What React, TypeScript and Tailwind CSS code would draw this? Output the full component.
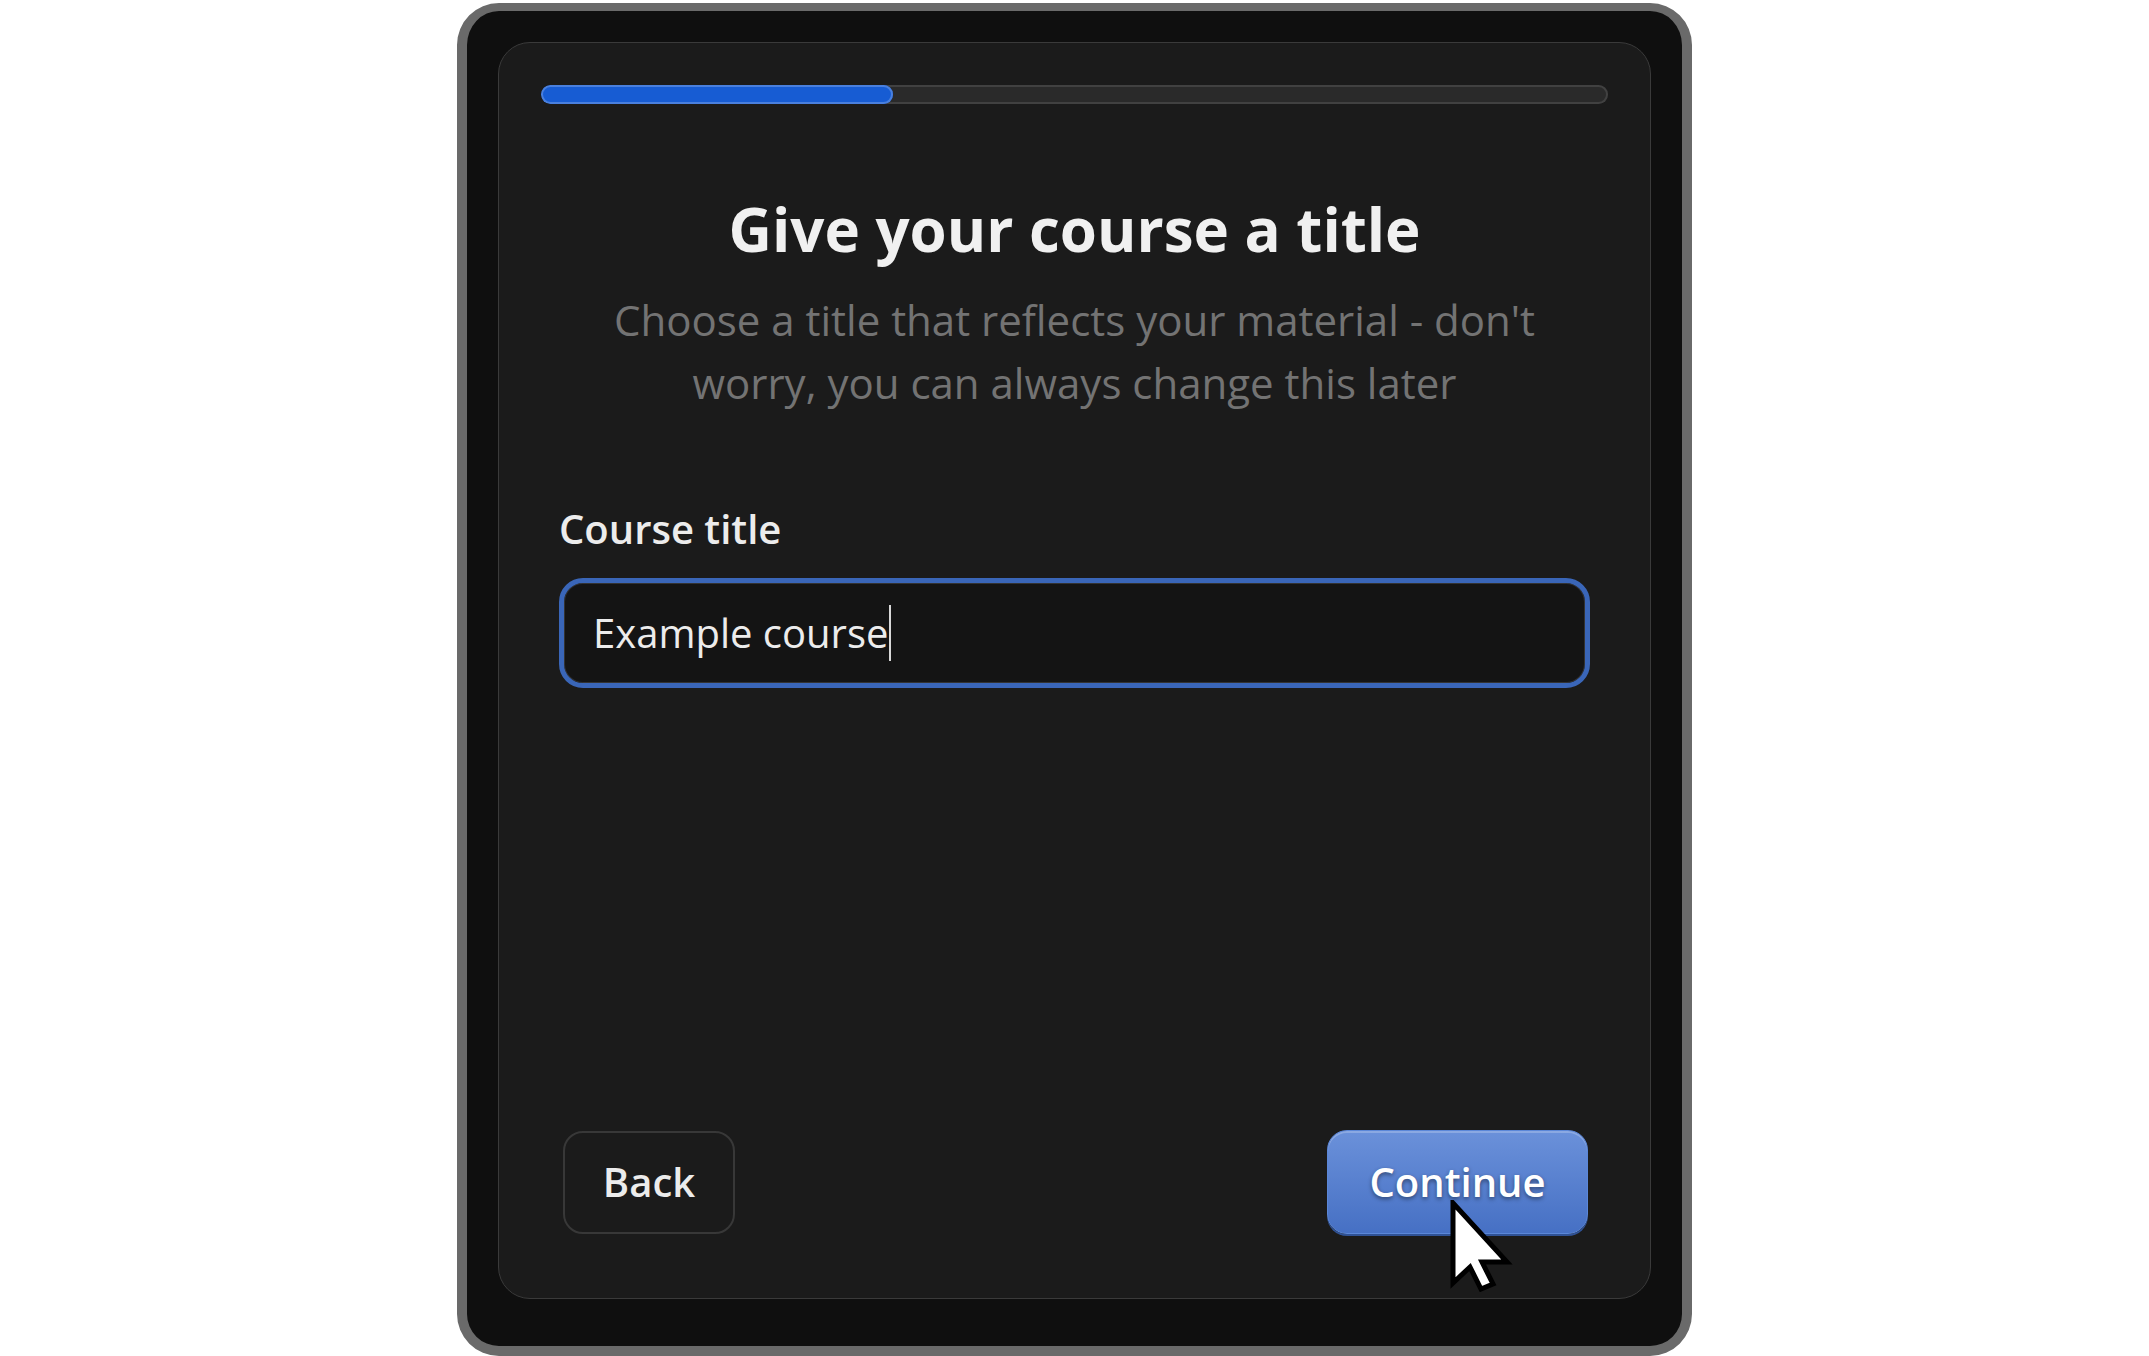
import React from "react";

function Cursor() {
  return (
    <svg
      width="64"
      height="92"
      viewBox="0 0 64 92"
      className="absolute left-[123px] top-[70px] pointer-events-none"
    >
      <polygon
        points="3,3 3,83 20,67 31,89 43,84 32,62 57,62"
        fill="#ffffff"
        stroke="#000000"
        strokeWidth="5"
        strokeLinejoin="miter"
      />
    </svg>
  );
}

export default function App() {
  const progress = 0.33;
  return (
    <div className="w-full h-[1356px] bg-white font-['Open_Sans',sans-serif] overflow-hidden">
      <div className="mx-auto mt-[3px] w-[1235px] h-[1353px] rounded-[42px] border-[10px] border-t-[8px] border-[#6a6a6a] bg-[#0f0f0f] pt-[31px] px-[31px] pb-[47px] flex flex-col">
        <div className="flex-1 flex flex-col rounded-[32px] border border-[#3a3a3a] bg-[#1b1b1b] p-[42px]">
          {/* step progress */}
          <div className="h-[19px] rounded-full bg-[#2a2a2a] shadow-[inset_0_0_0_2px_#414141] overflow-hidden">
            <div
              className="h-full rounded-full bg-[#175cd3] shadow-[inset_0_0_0_2px_#4a80de]"
              style={{ width: `${progress * 100}%` }}
            />
          </div>

          <h1 className="mt-[88px] text-center text-[60px] leading-[74px] font-bold text-[#f0f0f0]">
            Give your course a title
          </h1>
          <p className="mt-[22px] mx-auto max-w-[980px] text-center text-[42px] leading-[63px] text-[#737373]">
            Choose a title that reflects your material - don't worry, you can always change this later
          </p>

          <div className="flex-1 flex flex-col px-[18px] pb-[22px]">
            <label className="mt-[87px] text-[40px] leading-[56px] font-semibold text-[#ececec]">
              Course title
            </label>
            <div className="mt-[21px] h-[110px] rounded-[24px] border-[5px] border-[#3a66b8] bg-[#141414] shadow-[inset_0_0_0_1px_#333333] px-[29px] flex items-center">
              <span className="text-[40px] text-[#ececec]">Example course</span>
              <span className="ml-[1px] w-[2px] h-[56px] bg-[#d8d8d8]" />
            </div>

            <div className="flex-1" />

            <div className="flex items-center justify-between pl-[4px] pr-[2px]">
              <button className="w-[172px] h-[103px] rounded-[20px] border-2 border-[#383838] bg-[#1b1b1b] text-[40px] font-semibold text-[#ececec]">
                Back
              </button>
              <div className="relative">
                <button className="w-[261px] h-[104px] rounded-[20px] border border-[#5b87d8] bg-linear-to-b from-[#6b91da] to-[#4670c4] shadow-[inset_0_2px_0_rgba(255,255,255,0.22),0_2px_0_#2f5296] text-[40px] font-semibold text-white [text-shadow:0_2px_4px_rgba(0,0,0,0.45)]">
                  Continue
                </button>
                <Cursor />
              </div>
            </div>
          </div>
        </div>
      </div>
    </div>
  );
}
